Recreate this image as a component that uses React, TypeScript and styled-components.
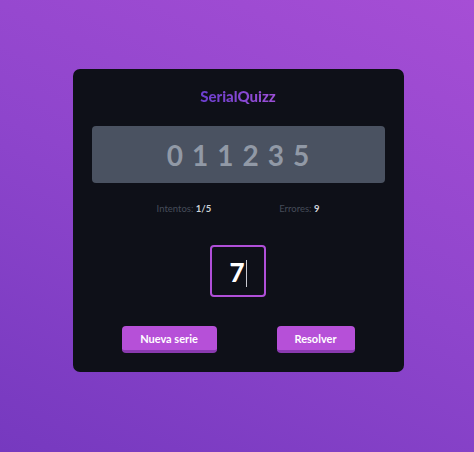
import * as React from 'react';
import styled, { createGlobalStyle } from 'styled-components';

const GlobalStyle = createGlobalStyle`
  html, body {
    margin: 0;
    padding: 0;
  }
  body {
    font-family: Lato, "Open Sans", sans-serif;
  }
`;

const Page = styled.div`
  width: 474px;
  height: 452px;
  display: flex;
  align-items: flex-start;
  justify-content: center;
  padding-top: 69px;
  box-sizing: border-box;
  background: linear-gradient(25deg, #7639bf 0%, #8e45cc 50%, #a64ed5 100%);
`;

const Card = styled.div`
  width: 331px;
  height: 303px;
  margin-left: 2px;
  box-sizing: border-box;
  background-color: #0e1018;
  border-radius: 7px;
  padding: 17px 19px 0;
  display: flex;
  flex-direction: column;
  align-items: center;
`;

const Title = styled.h1`
  margin: 0;
  font-size: 15px;
  font-weight: 900;
  line-height: 20px;
  background: linear-gradient(90deg, #6a3ecd, #9c4fd6);
  -webkit-background-clip: text;
  background-clip: text;
  color: transparent;
`;

const Display = styled.div`
  margin-top: 20px;
  width: 100%;
  height: 57px;
  border-radius: 4px;
  background-color: #4a5261;
  display: flex;
  align-items: center;
  justify-content: center;
  gap: 9px;
`;

const Digit = styled.span`
  font-size: 28px;
  font-weight: 700;
  color: #9199a6;
  line-height: 1;
`;

const Stats = styled.div`
  margin-top: 19px;
  display: flex;
  justify-content: center;
  gap: 68px;
  font-size: 9.5px;
  line-height: 14px;
`;

const Stat = styled.span`
  color: #454c59;
`;

const StatValue = styled.b`
  color: #cfd3da;
  font-weight: 700;
`;

const AnswerBox = styled.div`
  margin-top: 29px;
  width: 56px;
  height: 52px;
  box-sizing: border-box;
  border: 2px solid #b04fd8;
  border-radius: 4px;
  display: flex;
  align-items: center;
  justify-content: center;
`;

const AnswerValue = styled.span`
  font-size: 26px;
  font-weight: 900;
  color: #ffffff;
  line-height: 1;
  padding-top: 2px;
`;

const Caret = styled.span`
  display: inline-block;
  width: 1px;
  height: 27px;
  margin-left: 1px;
  margin-top: 4px;
  background-color: #c9c9d1;
`;

const Actions = styled.div`
  margin-top: 29px;
  display: flex;
  justify-content: center;
  gap: 60px;
`;

const Button = styled.button<{ $width: number }>`
  width: ${p => p.$width}px;
  height: 27px;
  border: none;
  border-bottom: 3px solid #8a3ab0;
  border-radius: 4px;
  background-color: #b650d8;
  color: #ffffff;
  font-family: Lato, "Open Sans", sans-serif;
  font-size: 11px;
  font-weight: 700;
  padding: 0;
  cursor: pointer;
`;

const digits = [0, 1, 1, 2, 3, 5];

export default function App() {
  return (
    <>
      <GlobalStyle />
      <Page>
        <Card>
          <Title>SerialQuizz</Title>
          <Display>
            {digits.map((d, i) => (
              <Digit key={i}>{d}</Digit>
            ))}
          </Display>
          <Stats>
            <Stat>Intentos: <StatValue>1/5</StatValue></Stat>
            <Stat>Errores: <StatValue>9</StatValue></Stat>
          </Stats>
          <AnswerBox>
            <AnswerValue>7</AnswerValue>
            <Caret />
          </AnswerBox>
          <Actions>
            <Button $width={95}>Nueva serie</Button>
            <Button $width={78}>Resolver</Button>
          </Actions>
        </Card>
      </Page>
    </>
  );
}
